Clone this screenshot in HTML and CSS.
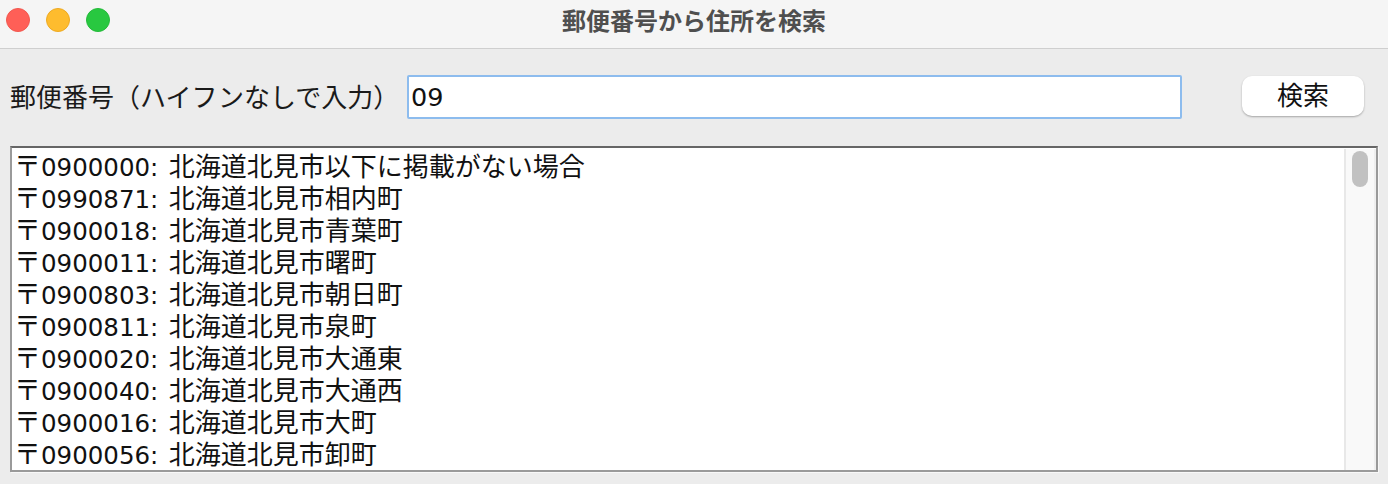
FILE: index.html
```html
<!DOCTYPE html>
<html lang="ja">
<head>
    <meta charset="UTF-8">
    <title>郵便番号から住所を検索</title>
    <link rel="stylesheet" href="styles.css">
</head>
<body>
    <div class="titlebar">
        <div class="lights">
            <span class="light red"></span>
            <span class="light yellow"></span>
            <span class="light green"></span>
        </div>
        <h1>郵便番号から住所を検索</h1>
    </div>
    <div class="form">
        <label>郵便番号（ハイフンなしで入力）</label>
        <div class="input">09</div>
        <div class="button">検索</div>
    </div>
    <div class="list">
        <ul>
            <li><span class="mark">〒</span><span class="code">0900000:</span> 北海道北見市以下に掲載がない場合</li>
            <li><span class="mark">〒</span><span class="code">0990871:</span> 北海道北見市相内町</li>
            <li><span class="mark">〒</span><span class="code">0900018:</span> 北海道北見市青葉町</li>
            <li><span class="mark">〒</span><span class="code">0900011:</span> 北海道北見市曙町</li>
            <li><span class="mark">〒</span><span class="code">0900803:</span> 北海道北見市朝日町</li>
            <li><span class="mark">〒</span><span class="code">0900811:</span> 北海道北見市泉町</li>
            <li><span class="mark">〒</span><span class="code">0900020:</span> 北海道北見市大通東</li>
            <li><span class="mark">〒</span><span class="code">0900040:</span> 北海道北見市大通西</li>
            <li><span class="mark">〒</span><span class="code">0900016:</span> 北海道北見市大町</li>
            <li><span class="mark">〒</span><span class="code">0900056:</span> 北海道北見市卸町</li>
        </ul>
        <div class="scrollbar"><div class="thumb"></div></div>
    </div>
</body>
</html>
```

FILE: styles.css
```css
* { margin: 0; padding: 0; box-sizing: border-box; }
li { list-style: none; }
html, body {
    width: 100%;
    height: 100%;
    overflow: hidden;
}
body {
    background: #ececec;
    font-family: "Noto Sans CJK JP", "DejaVu Sans", sans-serif;
    color: #1a1a1a;
}
.titlebar {
    height: 49px;
    background: #f5f5f5;
    border-bottom: 1px solid #cfcfcf;
    position: relative;
    display: flex;
    align-items: center;
    justify-content: center;
    padding-bottom: 8px;
}
.titlebar h1 {
    font-size: 24px;
    font-weight: 700;
    color: #4f4f4f;
    line-height: 1;
}
.lights {
    position: absolute;
    left: 6px;
    top: 8px;
    display: flex;
    gap: 16px;
}
.light {
    width: 24px;
    height: 24px;
    border-radius: 50%;
    border: 1px solid transparent;
}
.red { background: #ff5f57; border-color: #f2584f; }
.yellow { background: #febc2e; border-color: #eeaa22; }
.green { background: #28c840; border-color: #24bb3a; }
.form {
    display: flex;
    align-items: center;
    height: 44px;
    margin-top: 26px;
    padding-left: 10px;
}
.form label {
    width: 397px;
    margin-bottom: 2px;
    font-size: 26px;
    line-height: 1;
    white-space: nowrap;
}
.input {
    width: 775px;
    height: 44px;
    background: #fff;
    border: 2px solid #8dbcee;
    border-radius: 2px;
    padding-left: 2px;
    font-family: "DejaVu Sans", sans-serif;
    font-size: 25.5px;
    line-height: 40px;
    color: #111;
}
.button {
    width: 122px;
    height: 40px;
    margin-left: 60px;
    margin-bottom: 2px;
    background: #fff;
    border-radius: 10px;
    box-shadow: 0 1px 2px rgba(0, 0, 0, 0.3);
    text-align: center;
    font-size: 26px;
    line-height: 36px;
    color: #111;
}
.list {
    display: flex;
    justify-content: space-between;
    height: 326px;
    margin: 27px 10px 0;
    background: #fff;
    border: 2px solid #9a9a9a;
    border-top-color: #666;
    box-shadow: 1px 1px 0 #f8f8f8;
    overflow: hidden;
}
.list ul {
    padding: 3px 0 0 2px;
}
.list li {
    height: 32px;
    font-family: "DejaVu Sans", "Noto Sans CJK JP", sans-serif;
    font-size: 26px;
    line-height: 32px;
    white-space: nowrap;
    color: #111;
}
.mark {
    font-size: 27px;
}
.code {
    margin-right: 2px;
    font-size: 24.5px;
}
.scrollbar {
    width: 32px;
    margin-top: 1px;
    background: #f9f9f9;
    border-left: 2px solid #e8e8e8;
    border-right: 2px solid #efefef;
    padding: 2px 0 0 6px;
}
.thumb {
    width: 16px;
    height: 36px;
    background: #c1c1c1;
    border-radius: 8px;
}
```
